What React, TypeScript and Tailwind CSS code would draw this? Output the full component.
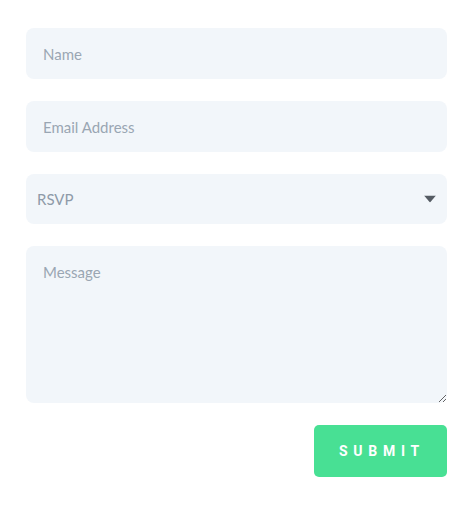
export default function App() {
  const field =
    "block w-full h-[51px] rounded-lg bg-[#f2f6fa] px-[17px] text-[15px] text-slate-600 placeholder:text-[#9aa6b3] outline-none";

  return (
    <div className="min-h-[505px] bg-white pt-[28px] px-[26px]" style={{ fontFamily: "Lato, 'Noto Sans', sans-serif" }}>
      <form className="flex w-[421px] flex-col gap-[22px]" onSubmit={(e) => e.preventDefault()}>
        <input className={field} placeholder="Name" />
        <input className={field} placeholder="Email Address" />
        <div className="relative">
          <select
            defaultValue=""
            className="block h-[50px] w-full appearance-none rounded-lg bg-[#f2f6fa] px-[11px] text-[15px] text-[#8e9aa8] outline-none"
          >
            <option value="" disabled>
              RSVP
            </option>
            <option>Yes</option>
            <option>No</option>
          </select>
          <svg
            className="pointer-events-none absolute right-[11px] top-1/2 -translate-y-1/2"
            width="12"
            height="7"
            viewBox="0 0 12 7"
          >
            <path d="M0 0h12L6 7z" fill="#555b63" />
          </svg>
        </div>
        <textarea
          className="block h-[157px] w-full resize-y rounded-lg bg-[#f2f6fa] px-[17px] pt-[15px] text-[15px] text-slate-600 placeholder:text-[#9aa6b3] outline-none"
          placeholder="Message"
        />
        <div className="flex justify-end">
          <button
            type="submit"
            className="h-[52px] w-[133px] rounded-[5px] bg-[#48e094] pl-[3px] text-[14px] font-bold tracking-[0.41em] text-white"
            style={{ fontFamily: "Roboto, 'Liberation Sans', sans-serif" }}
          >
            SUBMIT
          </button>
        </div>
      </form>
    </div>
  );
}
